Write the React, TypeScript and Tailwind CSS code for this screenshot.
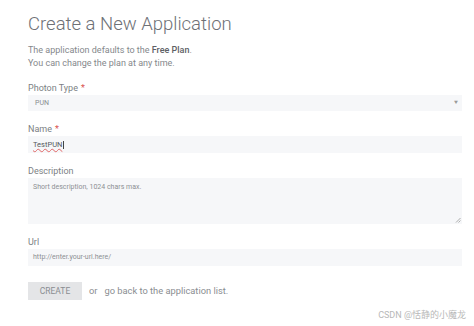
import React from "react";

const font = { fontFamily: "Roboto, 'Noto Sans CJK SC', sans-serif" };

function Label({ text, required, className }: { text: string; required?: boolean; className?: string }) {
  return (
    <div className={`h-[12px] text-[9px] leading-[12px] text-[#7c7f84] ${className ?? ""}`}>
      {text}
      {required && <span className="ml-[3px] text-[#d9534f]">*</span>}
    </div>
  );
}

export default function App() {
  return (
    <div className="relative h-[326px] w-[474px] overflow-hidden bg-white" style={font}>
      <div className="ml-[28px] flex w-[434px] flex-col pt-[12px]">
        <h1 className="h-[24px] text-[18.5px] font-light leading-[24px] text-[#6e7176]">
          Create a New Application
        </h1>
        <p className="mt-[8px] text-[9px] leading-[12.5px] text-[#85888c]">
          The application defaults to the <span className="font-medium text-[#5e6166]">Free Plan</span>.
          <br />
          You can change the plan at any time.
        </p>

        <Label text="Photon Type" required className="mt-[13px]" />
        <div className="mt-[1px] flex h-[16px] items-center justify-between bg-[#f6f7f9] pl-[7px] pr-[4px]">
          <span className="text-[7px] text-[#8a8d91]">PUN</span>
          <span className="text-[4px] text-[#9a9a9a]">▼</span>
        </div>

        <Label text="Name" required className="mt-[12px]" />
        <div className="mt-[1px] flex h-[17px] items-center bg-[#f6f7f9] pl-[5px]">
          <span className="text-[7.5px] text-[#55585c] underline decoration-[#e06666] decoration-wavy decoration-[0.5px]">
            TestPUN
          </span>
          <span className="ml-[1px] h-[8px] w-px bg-[#444]" />
        </div>

        <Label text="Description" className="mt-[12px]" />
        <div className="relative mt-[1px] h-[46px] bg-[#f6f7f9] pl-[5px] pt-[5px]">
          <span className="block text-[7px] leading-[9px] text-[#8d9094]">Short description, 1024 chars max.</span>
          <svg className="absolute bottom-[1px] right-[1px]" width="6" height="6" viewBox="0 0 6 6">
            <path d="M1 5.5 L5.5 1 M3.5 5.5 L5.5 3.5" stroke="#9a9a9a" strokeWidth="0.8" />
          </svg>
        </div>

        <Label text="Url" className="mt-[12px]" />
        <div className="mt-[1px] flex h-[17px] items-center bg-[#f6f7f9] pl-[5px]">
          <span className="text-[7px] text-[#8d9094]">http://enter.your-url.here/</span>
        </div>

        <div className="mt-[16px] flex items-center">
          <div className="flex h-[18px] w-[54px] items-center justify-center bg-[#e4e5e7] text-[8.5px] text-[#8a8d91]">
            CREATE
          </div>
          <span className="ml-[7px] text-[9.3px] text-[#8a8d91]">or</span>
          <span className="ml-[7px] text-[9.3px] text-[#8a8d91]">go back to the application list.</span>
        </div>
      </div>
      <div className="absolute bottom-[4px] right-[8px] text-[9px] text-[#b8b8b8]">CSDN @恬静的小魔龙</div>
    </div>
  );
}
